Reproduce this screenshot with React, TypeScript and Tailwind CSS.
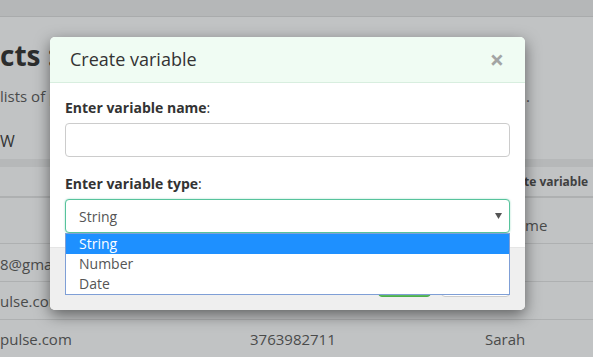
export default function App() {
  return (
    <div className="relative h-[357px] w-[593px] overflow-hidden bg-[#c1c3c4] font-['Open_Sans',sans-serif] text-[#3a3b3b]">
      {/* page behind the backdrop */}
      <div className="h-[17px] border-b border-[#a9abac] bg-[#b5b7b8]" />
      <h1 className="mt-[20px] text-[28px] font-bold leading-[36px] text-[#2c2d2d]">cts :</h1>
      <div className="mt-[13px] flex w-[530px] text-[15px] leading-[20px] text-[#4a4b4b]">
        <span className="w-[50px] overflow-hidden whitespace-nowrap">lists of products</span>
        <span className="ml-auto">.</span>
      </div>
      <div className="mt-[24px] text-[16px] leading-[22px] text-[#333435]">W</div>
      <div className="mt-[7px] h-[8px] bg-[#b6b8b9]" />
      <div className="flex h-[31px] items-center border-b-2 border-[#aeb0b1] text-[12px] font-bold text-[#3f4040]">
        <span className="ml-[524px] whitespace-nowrap">te variable</span>
      </div>
      <div className="flex h-[46px] border-b border-[#aeb0b1] pt-[17px] text-[15px] leading-[20px] text-[#4a4b4b]">
        <span className="ml-[525px]">me</span>
      </div>
      <div className="flex h-[38px] border-b border-[#aeb0b1] pt-[10px] text-[15px] leading-[20px] text-[#4a4b4b]">
        <span className="w-[50px] overflow-hidden whitespace-nowrap">8@gmail.com</span>
      </div>
      <div className="flex h-[38px] border-b border-[#aeb0b1] pt-[9px] text-[15px] leading-[20px] text-[#4a4b4b]">
        <span className="w-[50px] overflow-hidden whitespace-nowrap">ulse.com</span>
      </div>
      <div className="flex h-[38px] pt-[9px] text-[15px] leading-[20px] text-[#4a4b4b]">
        <span className="w-[250px]">pulse.com</span>
        <span className="w-[235px]">3763982711</span>
        <span>Sarah</span>
      </div>

      {/* modal */}
      <div className="absolute left-[50px] top-[37px] w-[475px] rounded-[5px] bg-white shadow-[0_5px_15px_rgba(0,0,0,0.5)]">
        <div className="flex h-[46px] items-center justify-between rounded-t-[5px] border-b border-[#d8eedf] bg-[#f0fcf3] pl-[20px] pr-[21px]">
          <h4 className="text-[18px] leading-[25px] text-[#333]">Create variable</h4>
          <span className="text-[25px] font-bold leading-none text-[#a3a5a4]">×</span>
        </div>
        <div className="px-[15px] pb-[14px] pt-[15px]">
          <label className="block text-[14px] font-bold leading-[20px] text-[#333]">
            Enter variable name<span className="font-normal">:</span>
          </label>
          <div className="mt-[5px] h-[34px] rounded-[4px] border border-[#cccccc] bg-white" />
          <label className="mt-[17px] block text-[14px] font-bold leading-[20px] text-[#333]">
            Enter variable type<span className="font-normal">:</span>
          </label>
          <div className="mt-[5px] flex h-[34px] items-center justify-between rounded-[4px] border border-[#57c39c] bg-white pl-[13px] pr-[7px] shadow-[0_0_2px_rgba(87,195,156,0.6)]">
            <span className="text-[14px] text-[#555]">String</span>
            <svg width="7" height="6" viewBox="0 0 7 6">
              <polygon points="0,0 7,0 3.5,6" fill="#555" />
            </svg>
          </div>
        </div>
        <div className="flex h-[63px] justify-end gap-[10px] rounded-b-[5px] border-t border-[#e5e5e5] bg-[#efefef] px-[15px] pt-[15px]">
          <button className="h-[34px] rounded-[4px] border border-[#4cae4c] bg-[#5cb85c] px-[10px] text-[14px] text-white">Save</button>
          <button className="h-[34px] rounded-[4px] border border-[#cccccc] bg-white px-[12px] text-[14px] text-[#333]">Cancel</button>
        </div>

        {/* open select list */}
        <ul className="absolute left-[15px] top-[196px] w-[445px] border border-[#7f9fd6] bg-white text-[14px] leading-[20px] text-[#555]">
          <li className="h-[20px] bg-[#1e90ff] pl-[13px] text-white">String</li>
          <li className="h-[20px] pl-[13px]">Number</li>
          <li className="h-[20px] pl-[13px]">Date</li>
        </ul>
      </div>
    </div>
  );
}
